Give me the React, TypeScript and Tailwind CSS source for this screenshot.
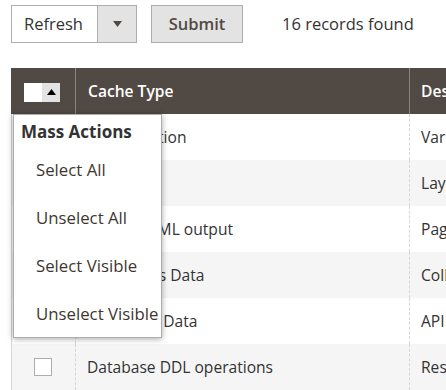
import React from 'react';

const rows = [
    { type: 'Configuration', desc: 'Various XML configurations that were collected across modules and merged' },
    { type: 'Layouts', desc: 'Layout building instructions' },
    { type: 'Blocks HTML output', desc: 'Page blocks HTML' },
    { type: 'Collections Data', desc: 'Collection data files' },
    { type: 'Reflection Data', desc: 'API interfaces reflection data' },
    { type: 'Database DDL operations', desc: 'Results of DDL queries, such as describing tables or indexes' },
];

const massActions = ['Select All', 'Unselect All', 'Select Visible', 'Unselect Visible'];

export default function App() {
    return (
        <div
            className="w-[446px] h-[390px] overflow-hidden bg-white text-[#333333] pl-[11px] pt-[5px]"
            style={{ fontFamily: '"Open Sans", "Liberation Sans", sans-serif' }}
        >
            {/* Toolbar */}
            <div className="flex items-center h-[38px]">
                <div className="flex h-[38px] border border-[#adadad] w-[126px]">
                    <div className="flex-1 flex items-center pl-[12px] text-[16.5px] text-[#333333]">Refresh</div>
                    <div className="w-[39px] border-l border-[#adadad] bg-[#e3e3e3] flex items-center justify-center">
                        <svg width="9" height="6" viewBox="0 0 9 6">
                            <path d="M0 0 L9 0 L4.5 6 Z" fill="#514943" />
                        </svg>
                    </div>
                </div>
                <button className="ml-[14px] h-[38px] w-[92px] border border-[#adadad] bg-[#e3e3e3] text-[16.5px] font-semibold text-[#514943]">
                    Submit
                </button>
                <span className="ml-[39px] text-[16.5px] text-[#333333]">16 records found</span>
            </div>

            {/* Grid */}
            <table className="mt-[25px] border-collapse w-[900px] table-fixed text-[15.6px]">
                <colgroup>
                    <col className="w-[64px]" />
                    <col className="w-[334px]" />
                    <col />
                </colgroup>
                <thead>
                    <tr className="bg-[#514943] text-white h-[46px]">
                        <th className="relative p-0 border-l border-[#514943]">
                            <div className="flex ml-[12px] h-[19px] w-[36px] mt-[2px]">
                                <div className="w-[18px] bg-white" />
                                <div className="w-[18px] bg-[#e3e3e3] flex items-center justify-center">
                                    <svg width="9" height="6" viewBox="0 0 9 6">
                                        <path d="M4.5 0 L9 6 L0 6 Z" fill="#000" />
                                    </svg>
                                </div>
                            </div>
                            {/* Mass actions dropdown */}
                            <div className="absolute left-[1px] top-full w-[149px] h-[224px] bg-white border border-[#adadad] shadow-[0_1px_6px_rgba(0,0,0,0.35)] z-10 text-left font-normal">
                                <div className="pl-[7px] pt-[6px] pb-[3px] leading-[22px] text-[17px] font-bold text-[#333333]">
                                    Mass Actions
                                </div>
                                {massActions.map((item) => (
                                    <div key={item} className="h-[48px] flex items-center pl-[22px] text-[16.8px] text-[#41362f] whitespace-nowrap">
                                        {item}
                                    </div>
                                ))}
                            </div>
                        </th>
                        <th className="p-0 pt-[2px] pl-[12px] text-left font-semibold border-l border-[#8a837f]">Cache Type</th>
                        <th className="p-0 pt-[2px] pl-[11px] text-left font-semibold border-l border-[#8a837f] whitespace-nowrap">Description</th>
                    </tr>
                </thead>
                <tbody>
                    {rows.map((row, i) => (
                        <tr key={row.type} className={`h-[46px] ${i % 2 === 1 ? 'bg-[#f5f5f5]' : 'bg-white'}`}>
                            <td className="p-0 border-l border-[#d6d6d6]">
                                <div className="ml-[22px] w-[18px] h-[18px] border border-[#adadad] bg-white" />
                            </td>
                            <td className="p-0 pt-[2px] pl-[11px] border-l border-dashed border-[#d6d6d6] whitespace-nowrap">{row.type}</td>
                            <td className="p-0 pt-[2px] pl-[11px] border-l border-dashed border-[#d6d6d6] whitespace-nowrap">{row.desc}</td>
                        </tr>
                    ))}
                </tbody>
            </table>
        </div>
    );
}
